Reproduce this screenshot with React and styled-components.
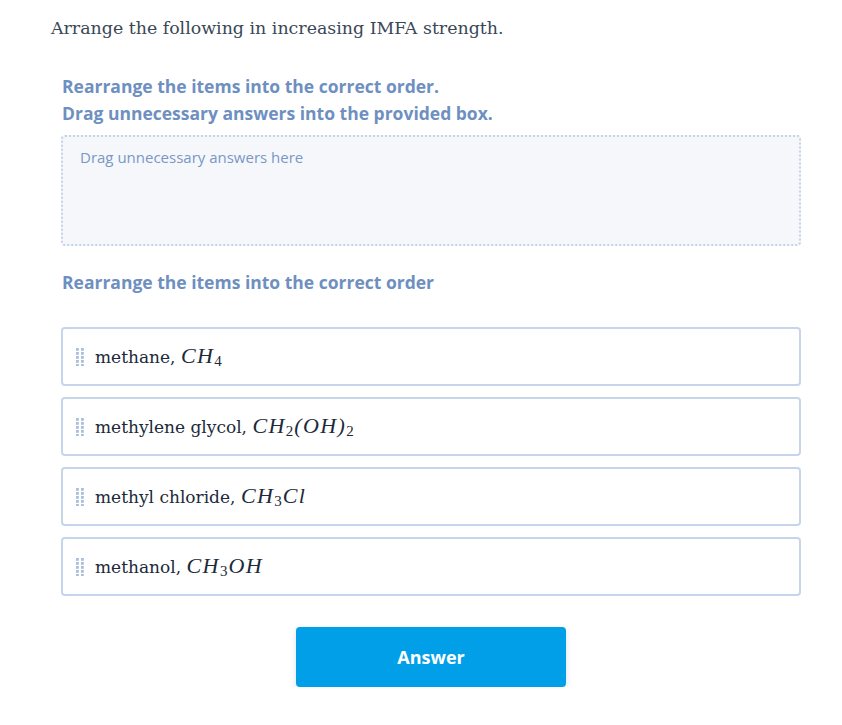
import React from 'react';
import styled, { createGlobalStyle } from 'styled-components';

const GlobalStyle = createGlobalStyle`
  body {
    margin: 0;
    background: #ffffff;
  }
`;

const items = [
  { label: 'methane, ', math: ['CH', '4'] },
  { label: 'methylene glycol, ', math: ['CH', '2', '(OH)', '2'] },
  { label: 'methyl chloride, ', math: ['CH', '3', 'Cl'] },
  { label: 'methanol, ', math: ['CH', '3', 'OH'] },
];

// formula parts: even index = italic text, odd index = subscript digit
const Formula = ({ parts }) => (
  <MathText>
    {parts.map((p, i) =>
      i % 2 === 0 ? <span key={i}>{p}</span> : <Sub key={i}>{p}</Sub>
    )}
  </MathText>
);

const Handle = () => (
  <HandleIcon width="8" height="18" viewBox="0 0 8 18">
    {[0, 1, 2, 3, 4].map(r =>
      [0, 1].map(c => (
        <rect key={`${r}-${c}`} x={c * 5} y={r * 4} width="2.8" height="2.8" fill="#a9bfdd" />
      ))
    )}
  </HandleIcon>
);

const App = () => (
  <>
    <GlobalStyle />
    <Page>
      <Question>Arrange the following in increasing IMFA strength.</Question>
      <Body>
        <Instruction>
          Rearrange the items into the correct order.
          <br />
          Drag unnecessary answers into the provided box.
        </Instruction>
        <DropZone>Drag unnecessary answers here</DropZone>
        <SectionTitle>Rearrange the items into the correct order</SectionTitle>
        <ItemList>
          {items.map(item => (
            <Item key={item.label}>
              <Handle />
              <ItemText>
                {item.label}
                <Formula parts={item.math} />
              </ItemText>
            </Item>
          ))}
        </ItemList>
        <ButtonRow>
          <AnswerButton>Answer</AnswerButton>
        </ButtonRow>
      </Body>
    </Page>
  </>
);

const Page = styled.div`
  padding: 14px 41px 0 51px;
`;

const Question = styled.div`
  font-family: 'DejaVu Serif', Georgia, serif;
  font-size: 17.4px;
  color: #3a4756;
  line-height: 28px;
`;

const Body = styled.div`
  padding: 31px 0 0 10px;
`;

const Instruction = styled.div`
  font-family: 'Open Sans', sans-serif;
  font-weight: 700;
  font-size: 17.5px;
  line-height: 27px;
  color: #6e8fbf;
  padding-left: 1px;
`;

const DropZone = styled.div`
  margin-top: 8px;
  height: 111px;
  box-sizing: border-box;
  border: 2px dotted #c3d4e9;
  border-radius: 4px;
  background: #f5f7fb;
  padding: 10px 17px;
  font-family: 'Open Sans', sans-serif;
  font-size: 15px;
  color: #7898c6;
  line-height: 20px;
`;

const SectionTitle = styled.div`
  margin-top: 24px;
  font-family: 'Open Sans', sans-serif;
  font-weight: 700;
  font-size: 17.5px;
  line-height: 24px;
  color: #6e8fbf;
  padding-left: 1px;
`;

const ItemList = styled.div`
  margin-top: 33px;
  display: flex;
  flex-direction: column;
  gap: 11px;
`;

const Item = styled.div`
  height: 59px;
  box-sizing: border-box;
  border: 2px solid #c6d5ea;
  border-radius: 4px;
  display: flex;
  align-items: center;
  padding-left: 13px;
  gap: 11px;
`;

const HandleIcon = styled.svg`
  flex-shrink: 0;
`;

const ItemText = styled.div`
  font-family: 'DejaVu Serif', Georgia, serif;
  font-size: 17px;
  color: #1c2a3a;
  white-space: pre;
`;

const MathText = styled.span`
  font-family: 'Liberation Serif', 'Times New Roman', serif;
  font-style: italic;
  font-size: 22px;
  letter-spacing: 1.4px;
`;

const Sub = styled.sub`
  font-style: normal;
  font-size: 15px;
  vertical-align: -3px;
  letter-spacing: 0;
  margin-right: 1px;
`;

const ButtonRow = styled.div`
  margin-top: 31px;
  display: flex;
  justify-content: center;
`;

const AnswerButton = styled.button`
  width: 270px;
  height: 60px;
  border: none;
  border-radius: 4px;
  background: #019fe8;
  color: #ffffff;
  font-family: 'Open Sans', sans-serif;
  font-weight: 700;
  font-size: 18px;
  box-shadow: 0 2px 6px rgba(40, 90, 160, 0.18);
  cursor: pointer;
`;

export default App;
